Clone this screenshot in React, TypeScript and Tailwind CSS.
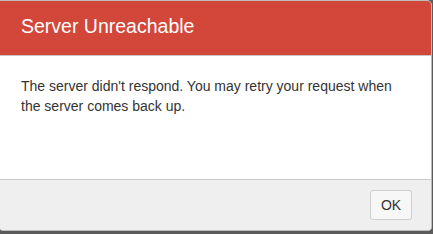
export default function App() {
  return (
    <div className="w-[433px] h-[234px] bg-[#5b5b5b] overflow-hidden" style={{ fontFamily: '"Liberation Sans", Arial, sans-serif' }}>
      <div className="h-[231px] w-[433px] flex flex-col bg-white border border-[#bdbdbd] rounded-tr-[5px] rounded-b-[4px] overflow-hidden -ml-px">
        <div className="h-[55px] shrink-0 bg-[#d2473a] border-b border-[#c8c8c8] flex items-center pl-[21px] pb-[2px]">
          <h1 className="text-[19.5px] text-white leading-none">Server Unreachable</h1>
        </div>
        <div className="flex-1 px-[21px] pt-[20px] text-[14px] leading-[20px] text-[#333]">
          The server didn't respond. You may retry your request when the server comes back up.
        </div>
        <div className="h-[51px] shrink-0 bg-[#efefef] border-t border-[#c8c8c8] flex items-center justify-end pr-[19px]">
          <button className="w-[42px] h-[30px] rounded-[3px] border border-[#cfcfcf] bg-[#f7f7f7] text-[14px] text-[#333]">
            OK
          </button>
        </div>
      </div>
    </div>
  )
}
